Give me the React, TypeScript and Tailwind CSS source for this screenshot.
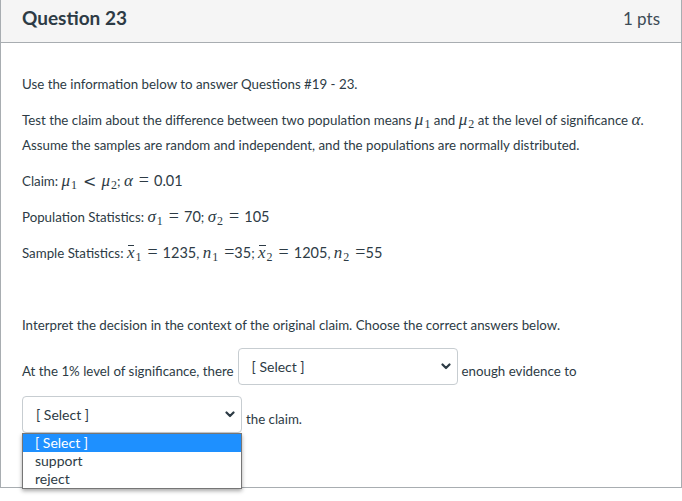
import React from "react";

const Var = ({ c, sub, bar }: { c: string; sub?: string; bar?: boolean }) => (
  <span className="font-['Liberation_Serif',serif] text-[17px] leading-none whitespace-nowrap">
    <span className="italic relative">
      {c}
      {bar && <span className="absolute left-[1px] right-[0px] top-[2px] h-[1px] bg-[#2d3b45]" />}
    </span>
    {sub && <span className="text-[12px] relative top-[3px] ml-[1px]">{sub}</span>}
  </span>
);

const Op = ({ c, r = true }: { c: string; r?: boolean }) => (
  <span className={`font-['Liberation_Serif',serif] text-[18px] leading-none ml-[6px] ${r ? "mr-[5px]" : "mr-0"}`}>{c}</span>
);

const Lt = () => (
  <span className="font-['DejaVu_Serif',serif] text-[16px] leading-none ml-[6px] mr-[5px] relative top-[1px]">&lt;</span>
);

const N = ({ children }: { children: React.ReactNode }) => (
  <span className="text-[14.5px] leading-none">{children}</span>
);

const Chevron = () => (
  <svg width="10" height="7" viewBox="0 0 10 7" className="shrink-0">
    <polyline points="1.5,1.5 5,5 8.5,1.5" fill="none" stroke="#2d3b45" strokeWidth="2.2" strokeLinecap="round" strokeLinejoin="round" />
  </svg>
);

const SelectBox = () => (
  <div className="w-[220px] h-[37px] border border-[#c7cdd1] rounded-[4px] bg-white flex items-center justify-between pl-[13px] pr-[6px] shrink-0">
    <span className="text-[14px] text-[#2d3b45]">[ Select ]</span>
    <Chevron />
  </div>
);

export default function App() {
  return (
    <div className="w-[682px] h-[501px] bg-white font-['Lato',sans-serif] text-[#2d3b45] overflow-hidden">
      <div className="border-x border-b border-[#a8adb1]">
        <div className="h-[43px] bg-[#f5f5f5] border-b border-[#a8adb1] flex items-center justify-between pl-[21px] pr-[21px]">
          <span className="text-[19px] font-bold text-[#2d3b45] relative top-[-3px]">Question 23</span>
          <span className="text-[17px] text-[#3d4b56] relative top-[-2px]">1 pts</span>
        </div>
        <div className="px-[21px] pt-[29px] pb-[54px] text-[13.3px] leading-[25px]">
          <p className="mb-[11px] h-[25px]">Use the information below to answer Questions #19 - 23.</p>
          <p className="mb-[11px] h-[50px]">
            Test the claim about the difference between two population means <Var c="μ" sub="1" /> and{" "}
            <Var c="μ" sub="2" /> at the level of significance <Var c="α" />.
            <br />
            Assume the samples are random and independent, and the populations are normally distributed.
          </p>
          <p className="mb-[11px] h-[25px] whitespace-nowrap">
            Claim: <Var c="μ" sub="1" />
            <Lt />
            <Var c="μ" sub="2" />; <Var c="α" />
            <Op c="=" />
            <N>0.01</N>
          </p>
          <p className="mb-[11px] h-[25px] whitespace-nowrap">
            Population Statistics: <Var c="σ" sub="1" />
            <Op c="=" />
            <N>70</N>; <Var c="σ" sub="2" />
            <Op c="=" />
            <N>105</N>
          </p>
          <p className="mb-[11px] h-[25px] whitespace-nowrap">
            Sample Statistics: <Var c="x" sub="1" bar />
            <Op c="=" />
            <N>1235</N>, <Var c="n" sub="1" />
            <Op c="=" r={false} />
            <N>35</N>; <Var c="x" sub="2" bar />
            <Op c="=" />
            <N>1205</N>, <Var c="n" sub="2" />
            <Op c="=" r={false} />
            <N>55</N>
          </p>
          <p className="mb-[11px] h-[25px]"></p>
          <p className="mb-[10px] h-[25px]">Interpret the decision in the context of the original claim. Choose the correct answers below.</p>
          <div className="flex items-end gap-[4px] mb-[11px]">
            <span className="pb-[1px]">At the 1% level of significance, there</span>
            <SelectBox />
            <span className="pb-[1px]">enough evidence to</span>
          </div>
          <div className="flex items-end gap-[4px] relative">
            <SelectBox />
            <span className="pb-[1px]">the claim.</span>
            <div className="absolute left-0 top-[37px] w-[220px] border border-[#767676] bg-white shadow-[0_2px_4px_rgba(0,0,0,0.35)] text-[14px] leading-[18px] z-10">
              <div className="bg-[#1e90ff] text-white pl-[12px]">[ Select ]</div>
              <div className="pl-[12px] text-[#2d3b45]">support</div>
              <div className="pl-[12px] text-[#2d3b45]">reject</div>
            </div>
          </div>
        </div>
      </div>
    </div>
  );
}
